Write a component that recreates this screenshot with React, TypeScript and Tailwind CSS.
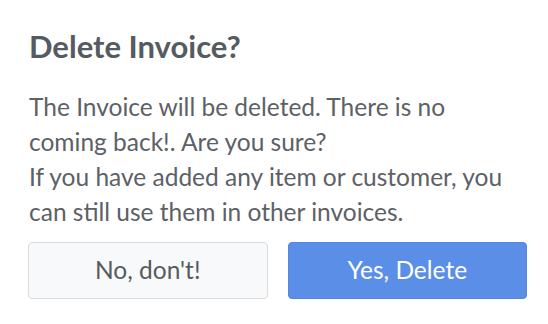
export default function App() {
  return (
    <div className="w-[548px] h-[324px] bg-white pl-[28px] pr-[21px] pt-[26px] font-['Lato',sans-serif]">
      <h2 className="text-[31px] font-bold leading-[40px] text-[#545b61] pl-[1px]">
        Delete Invoice?
      </h2>
      <p className="mt-[23px] text-[24.5px] leading-[35px] text-[#5c6166] pl-[1px]">
        The Invoice will be deleted. There is no
        <br />
        coming back!. Are you sure?
        <br />
        If you have added any item or customer, you
        <br />
        can still use them in other invoices.
      </p>
      <div className="mt-[13px] flex gap-[20px]">
        <button className="h-[57px] flex-1 rounded-[4px] border border-[#dcdcdc] bg-[#f8f9fa] text-[24.5px] text-[#565b60]">
          No, don't!
        </button>
        <button className="h-[57px] flex-1 rounded-[4px] border border-[#5585e0] bg-[#5b8ee6] text-[24.5px] text-white">
          Yes, Delete
        </button>
      </div>
    </div>
  );
}
